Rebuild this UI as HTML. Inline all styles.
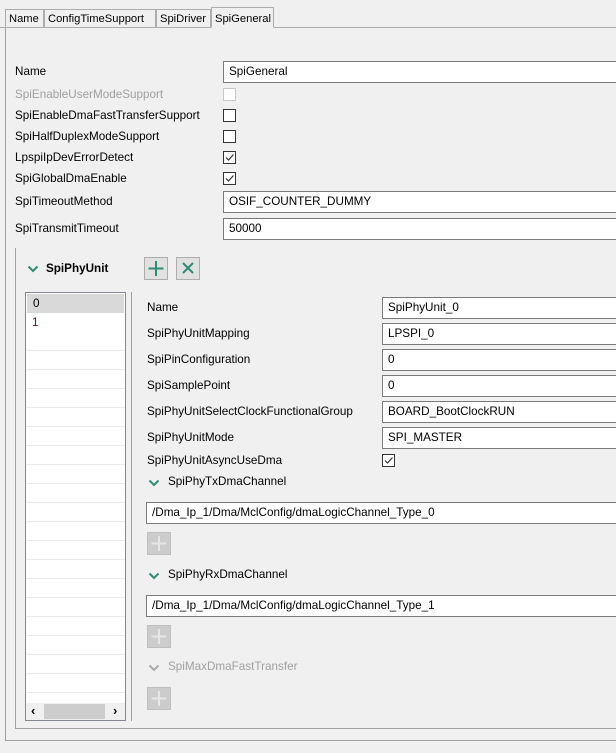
<!DOCTYPE html><html><head><style>
body{margin:0;width:616px;height:753px;background:#f0f0f0;font-family:"Liberation Sans",sans-serif;font-size:11.7px;color:#000;position:relative;overflow:hidden}
.a{position:absolute;white-space:nowrap}
.l{position:absolute;line-height:14px;white-space:nowrap}
.in{position:absolute;background:#fff;border-top:1px solid #7a7a7a;border-bottom:1px solid #7a7a7a;border-left:1px solid #7a7a7a;box-sizing:border-box;padding-left:5px;line-height:20px;right:-2px;white-space:nowrap}
.cb{position:absolute;width:11px;height:11px;border:1px solid #333;background:#fff}
.btn{position:absolute;width:24px;height:23px;border:1px solid #adadad;background:#e1e1e1;box-sizing:border-box}
.dis{background:#ccc;border-color:#bfbfbf}
.tab{position:absolute;top:9px;height:18px;border:1px solid #adadad;border-bottom:none;box-sizing:border-box;padding:2px 0 0 3px;line-height:14px;background:#f0f0f0;font-size:11.2px;white-space:nowrap;overflow:hidden}
</style></head><body>
<div style="position:absolute;left:0;top:27px;width:616px;border-top:1px solid #adadad"></div>
<div class="tab" style="left:5px;width:39px">Name</div>
<div class="tab" style="left:44px;width:112px">ConfigTimeSupport</div>
<div class="tab" style="left:156px;width:55px">SpiDriver</div>
<div class="tab" style="left:211px;width:63px;top:7px;height:21px;border-bottom:1px solid #f0f0f0;padding-top:4px">SpiGeneral</div>
<div style="position:absolute;left:5px;top:28px;height:712px;width:620px;border-left:1px solid #a0a0a0;border-bottom:1px solid #a0a0a0"></div>
<div class="l" style="left:15px;top:65px">Name</div><div class="in" style="left:223px;top:61px;height:22px">SpiGeneral</div>
<div class="l" style="left:15px;top:88px;color:#a0a0a0">SpiEnableUserModeSupport</div><div class="cb" style="left:223px;top:88px;border-color:#c8c8c8"></div>
<div class="l" style="left:15px;top:109px">SpiEnableDmaFastTransferSupport</div><div class="cb" style="left:223px;top:109px"></div>
<div class="l" style="left:15px;top:130px">SpiHalfDuplexModeSupport</div><div class="cb" style="left:223px;top:130px"></div>
<div class="l" style="left:15px;top:151px">LpspiIpDevErrorDetect</div><div class="cb" style="left:223px;top:151px"><svg width="11" height="11" style="position:absolute"><path d="M2 5.5L4.5 8L9.5 2.5" stroke="#333" fill="none" stroke-width="1.2"/></svg></div>
<div class="l" style="left:15px;top:172px">SpiGlobalDmaEnable</div><div class="cb" style="left:223px;top:172px"><svg width="11" height="11" style="position:absolute"><path d="M2 5.5L4.5 8L9.5 2.5" stroke="#333" fill="none" stroke-width="1.2"/></svg></div>
<div class="l" style="left:15px;top:195px">SpiTimeoutMethod</div><div class="in" style="left:223px;top:191px;height:22px">OSIF_COUNTER_DUMMY</div>
<div class="l" style="left:15px;top:222px">SpiTransmitTimeout</div><div class="in" style="left:223px;top:218px;height:22px">50000</div>
<div style="position:absolute;left:15px;top:248px;height:480px;width:620px;border-left:1px solid #a0a0a0;border-bottom:1px solid #a0a0a0"></div>
<svg class="a" style="left:27px;top:264px" width="12" height="10"><path d="M1.5 2.5L6 7L10.5 2.5" stroke="#2e8b74" stroke-width="2" fill="none"/></svg>
<div class="l" style="left:46px;top:262px;font-weight:bold">SpiPhyUnit</div>
<div class="btn" style="left:144px;top:257px"><svg width="22" height="21"><path d="M11 3V18M3.5 10.5H18.5" stroke="#2e8b74" stroke-width="2"/></svg></div>
<div class="btn" style="left:176px;top:257px"><svg width="22" height="21"><path d="M6 5L16 15M16 5L6 15" stroke="#2e8b74" stroke-width="2"/></svg></div>
<div style="position:absolute;left:25px;top:292px;width:99px;height:427px;border:1px solid #828790;background:#fff;overflow:hidden">
<div style="height:19px;background:#d9d9d9;margin:1px;line-height:19px;padding-left:6px">0</div>
<div style="height:18px;border-bottom:1px solid #eee;line-height:18px;padding-left:6px;color:#5a0a3c">1</div>
<div style="position:absolute;left:0;right:0;top:39px;bottom:0;background:repeating-linear-gradient(#fff 0 18px,#ebebeb 18px 19px)"></div>
<div style="position:absolute;left:0;right:0;bottom:0;height:17px;background:#f0f0f0"><div style="position:absolute;left:18px;top:1px;width:61px;height:15px;background:#cdcdcd"></div><span class="a" style="left:5px;top:0;font-size:13px;font-weight:bold">‹</span><span class="a" style="left:87px;top:0;font-size:13px;font-weight:bold">›</span></div>
</div>
<div style="position:absolute;left:131px;top:292px;height:429px;border-left:1px solid #a0a0a0"></div>
<div class="l" style="left:147px;top:301px">Name</div><div class="in" style="left:382px;top:297px;height:22px">SpiPhyUnit_0</div>
<div class="l" style="left:147px;top:327px">SpiPhyUnitMapping</div><div class="in" style="left:382px;top:323px;height:22px">LPSPI_0</div>
<div class="l" style="left:147px;top:353px">SpiPinConfiguration</div><div class="in" style="left:382px;top:349px;height:22px">0</div>
<div class="l" style="left:147px;top:379px">SpiSamplePoint</div><div class="in" style="left:382px;top:375px;height:22px">0</div>
<div class="l" style="left:147px;top:405px">SpiPhyUnitSelectClockFunctionalGroup</div><div class="in" style="left:382px;top:401px;height:22px">BOARD_BootClockRUN</div>
<div class="l" style="left:147px;top:431px">SpiPhyUnitMode</div><div class="in" style="left:382px;top:427px;height:22px">SPI_MASTER</div>
<div class="l" style="left:147px;top:454px">SpiPhyUnitAsyncUseDma</div><div class="cb" style="left:382px;top:454px"><svg width="11" height="11" style="position:absolute"><path d="M2 5.5L4.5 8L9.5 2.5" stroke="#333" fill="none" stroke-width="1.2"/></svg></div>
<svg class="a" style="left:148px;top:478px" width="12" height="10"><path d="M1.5 2.5L6 7L10.5 2.5" stroke="#2e8b74" stroke-width="2" fill="none"/></svg>
<div class="l" style="left:168px;top:475px">SpiPhyTxDmaChannel</div>
<div class="in" style="left:146px;top:502px;height:22px">/Dma_Ip_1/Dma/MclConfig/dmaLogicChannel_Type_0</div>
<div class="btn dis" style="left:147px;top:532px"><svg width="22" height="21"><path d="M11 3V18M3.5 10.5H18.5" stroke="#e6e6e6" stroke-width="2"/></svg></div>
<svg class="a" style="left:148px;top:571px" width="12" height="10"><path d="M1.5 2.5L6 7L10.5 2.5" stroke="#2e8b74" stroke-width="2" fill="none"/></svg>
<div class="l" style="left:168px;top:568px">SpiPhyRxDmaChannel</div>
<div class="in" style="left:146px;top:595px;height:22px">/Dma_Ip_1/Dma/MclConfig/dmaLogicChannel_Type_1</div>
<div class="btn dis" style="left:147px;top:625px"><svg width="22" height="21"><path d="M11 3V18M3.5 10.5H18.5" stroke="#e6e6e6" stroke-width="2"/></svg></div>
<svg class="a" style="left:148px;top:663px" width="12" height="10"><path d="M1.5 2.5L6 7L10.5 2.5" stroke="#aaa" stroke-width="2" fill="none"/></svg>
<div class="l" style="left:168px;top:660px;color:#a0a0a0">SpiMaxDmaFastTransfer</div>
<div class="btn dis" style="left:147px;top:687px"><svg width="22" height="21"><path d="M11 3V18M3.5 10.5H18.5" stroke="#e6e6e6" stroke-width="2"/></svg></div>
</body></html>
